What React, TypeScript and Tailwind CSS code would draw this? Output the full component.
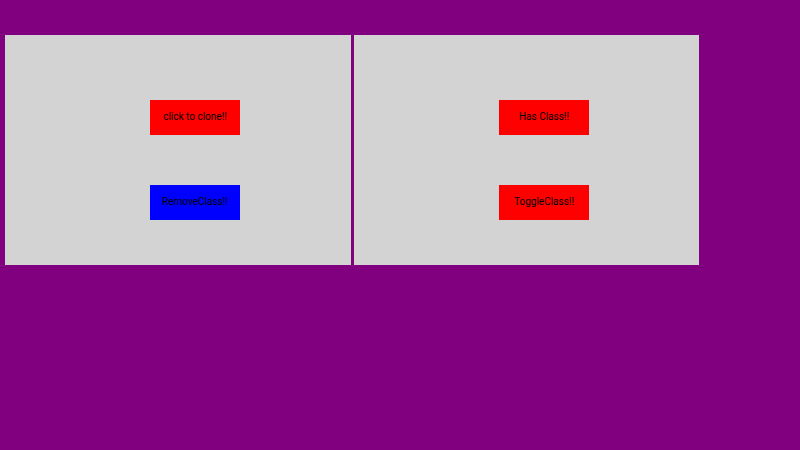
export default function App() {
  const box = "w-[90px] h-[35px] flex items-center justify-center pb-[2px] text-[10px] text-black";
  return (
    <div className="w-[800px] h-[450px] bg-[#800080] pt-[35px] pl-[5px] flex items-start gap-[3px]" style={{ fontFamily: "Roboto, 'Liberation Sans', sans-serif" }}>
      <div className="w-[346px] h-[230px] bg-[#d3d3d3] pt-[65px] pl-[145px] flex flex-col gap-[50px]">
        <div className={`${box} bg-[#ff0000]`}>click to clone!!</div>
        <div className={`${box} bg-[#0000ff]`}>RemoveClass!!</div>
      </div>
      <div className="w-[345px] h-[230px] bg-[#d3d3d3] pt-[65px] pl-[145px] flex flex-col gap-[50px]">
        <div className={`${box} bg-[#ff0000]`}>Has Class!!</div>
        <div className={`${box} bg-[#ff0000]`}>ToggleClass!!</div>
      </div>
    </div>
  );
}
